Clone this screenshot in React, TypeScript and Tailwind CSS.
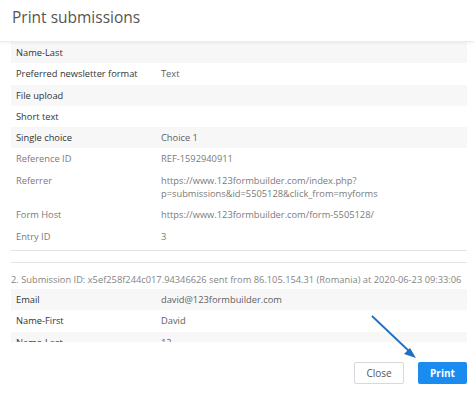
import React from "react";

type Row = { label: string; value?: React.ReactNode; meta?: boolean };

const FIRST: Row[] = [
  { label: "Name-Last" },
  { label: "Preferred newsletter format", value: "Text" },
  { label: "File upload" },
  { label: "Short text" },
  { label: "Single choice", value: "Choice 1" },
  { label: "Reference ID", value: "REF-1592940911", meta: true },
  {
    label: "Referrer",
    value: (
      <>
        https://www.123formbuilder.com/index.php?
        <br />
        p=submissions&amp;id=5505128&amp;click_from=myforms
      </>
    ),
    meta: true,
  },
  { label: "Form Host", value: "https://www.123formbuilder.com/form-5505128/", meta: true },
  { label: "Entry ID", value: "3", meta: true },
];

const SECOND: Row[] = [
  { label: "Email", value: "david@123formbuilder.com" },
  { label: "Name-First", value: "David" },
  { label: "Name-Last", value: "12" },
];

function Rows({ rows }: { rows: Row[] }) {
  return (
    <div>
      {rows.map((r, i) => (
        <div
          key={r.label + i}
          className={`grid grid-cols-[150px_1fr] py-1 leading-[13.3px] ${!r.meta && i % 2 === 0 ? "bg-[#f7f7f7]" : ""}`}
        >
          <div className={`pl-[5px] ${r.meta ? "text-[#7a7a7a]" : "text-[#333]"}`}>{r.label}</div>
          <div className={r.meta ? "text-[#7a7a7a]" : "text-[#606060]"}>{r.value}</div>
        </div>
      ))}
    </div>
  );
}

export default function App() {
  return (
    <div
      className="relative w-[474px] h-[399px] bg-white overflow-hidden flex flex-col text-[9.3px]"
      style={{ fontFamily: '"Open Sans", "Liberation Sans", sans-serif' }}
    >
      <div className="h-[42px] shrink-0 flex items-center pb-[5px] px-3 border-b border-[#ececec] shadow-[0_1px_3px_rgba(0,0,0,0.06)] z-10">
        <h1 className="text-[15.5px] text-[#555]">Print submissions</h1>
      </div>

      {/* scrolled content */}
      <div className="flex-1 overflow-hidden pl-[11px] pr-[7px]">
        <Rows rows={FIRST} />
        <div className="mt-[3px] border-b border-[#e3e3e3]" />
        <div className="mt-[11px] border-t border-[#e3e3e3] pt-[10px] pb-[3px] text-[#858585] leading-[13px] whitespace-nowrap">
          2. Submission ID: x5ef258f244c017.94346626 sent from 86.105.154.31 (Romania) at 2020-06-23 09:33:06
        </div>
        <Rows rows={SECOND} />
      </div>

      {/* footer */}
      <div className="h-[57px] shrink-0 flex justify-end items-start pt-5 pr-[7px] gap-[14px]">
        <button className="w-[50px] h-[22px] border border-[#d9d9d9] rounded-[2px] bg-white text-[#555] text-[10px]">
          Close
        </button>
        <button className="w-[49px] h-[22px] rounded-[2px] bg-[#1a8cf0] text-white text-[10px] font-bold">
          Print
        </button>
      </div>

      {/* annotation arrow */}
      <svg className="absolute left-0 top-0 pointer-events-none" width="474" height="399">
        <line x1="372" y1="316" x2="411" y2="353" stroke="#1f6fc4" strokeWidth="1.8" />
        <polygon points="416,358 404,354 410,348" fill="#1f6fc4" />
      </svg>
    </div>
  );
}
